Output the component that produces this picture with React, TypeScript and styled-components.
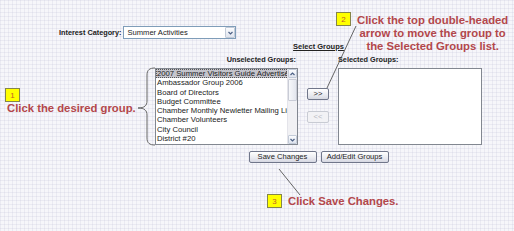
import styled, { createGlobalStyle } from 'styled-components';

const GlobalStyle = createGlobalStyle`
  html, body {
    margin: 0;
    padding: 0;
  }
  body {
    font-family: 'Liberation Sans', Arial, sans-serif;
  }
`;

/* ---- page ---- */

const Page = styled.div`
  position: relative;
  width: 514px;
  height: 231px;
  overflow: hidden;
  box-sizing: border-box;
  padding-top: 26px;
  color: #222;
  background-color: #f6f6fa;
  background-image:
    linear-gradient(to right, rgba(205, 205, 222, 0.3) 1px, transparent 1px),
    linear-gradient(to bottom, rgba(205, 205, 222, 0.3) 1px, transparent 1px);
  background-size: 4px 4px;
`;

/* ---- category row ---- */

const CategoryRow = styled.div`
  display: flex;
  align-items: center;
  gap: 2px;
  height: 13px;
  padding-left: 59px;
`;

const FieldLabel = styled.span`
  font-size: 7.3px;
  font-weight: bold;
`;

const Dropdown = styled.div`
  display: flex;
  width: 113px;
  height: 13px;
  box-sizing: border-box;
  border: 1px solid #7f9db9;
  background: #fff;
`;

const DropdownValue = styled.span`
  flex: 1;
  padding-left: 3px;
  font-size: 7.6px;
  line-height: 11px;
`;

const ArrowBox = styled.span<{ $disabled?: boolean }>`
  display: flex;
  align-items: center;
  justify-content: center;
  width: 9px;
  height: 9px;
  box-sizing: border-box;
  border: 1px solid #c3cbd8;
  border-radius: 1px;
  background: linear-gradient(#fbfcfe, #dfe4ee);
  color: #4d6185;
`;

const DropdownArrow = styled(ArrowBox)`
  width: 10px;
  height: 11px;
`;

/* ---- groups ---- */

const Groups = styled.div`
  display: grid;
  grid-template-columns: 143px 1fr 144px;
  width: 327px;
  margin: 3px 0 0 155px;
`;

const GroupsTitle = styled.div`
  grid-column: 1 / -1;
  margin-bottom: 3px;
  text-align: center;
  font-size: 7.5px;
  line-height: 10px;
  font-weight: bold;
  text-decoration: underline;
`;

const ColumnHeading = styled.div<{ $align: 'left' | 'right' }>`
  margin-bottom: 3px;
  padding-right: ${({ $align }) => ($align === 'right' ? '2px' : '0')};
  text-align: ${({ $align }) => $align};
  font-size: 7.3px;
  line-height: 10px;
  font-weight: bold;
`;

const ListBox = styled.div`
  display: flex;
  height: 77px;
  box-sizing: border-box;
  border: 1px solid #828790;
  background: #fff;
  overflow: hidden;
`;

const Items = styled.div`
  flex: 1;
  min-width: 0;
`;

const Item = styled.div<{ $selected?: boolean }>`
  height: 9.3px;
  padding-left: 1px;
  font-size: 7.7px;
  line-height: 9.3px;
  white-space: nowrap;
  overflow: hidden;
  background: ${({ $selected }) => ($selected ? '#c4c4cc' : 'transparent')};
  outline: ${({ $selected }) => ($selected ? '1px dotted #555' : 'none')};
  outline-offset: -1px;
`;

const Scrollbar = styled.div`
  display: flex;
  flex-direction: column;
  width: 9px;
  background: #f1f1f4;
  border-left: 1px solid #e4e4ea;
`;

const ScrollTrack = styled.div`
  flex: 1;
  padding-top: 1px;
`;

const ScrollThumb = styled.div`
  height: 22px;
  box-sizing: border-box;
  border: 1px solid #c9ccd6;
  border-radius: 1px;
  background: linear-gradient(to right, #f7f8fb, #e3e6ee);
`;

const MoveColumn = styled.div`
  display: flex;
  flex-direction: column;
  align-items: center;
  gap: 11px;
  padding-top: 20px;
`;

const Button = styled.button<{ $width: number; $disabled?: boolean }>`
  width: ${({ $width }) => $width}px;
  height: 12px;
  padding: 0;
  box-sizing: border-box;
  border: 1px solid ${({ $disabled }) => ($disabled ? '#c8cbd3' : '#70768a')};
  border-radius: 2px;
  background: ${({ $disabled }) =>
    $disabled ? '#f2f2f5' : 'linear-gradient(#ffffff, #e9eaf0 60%, #d6d8e2)'};
  color: ${({ $disabled }) => ($disabled ? '#b8bac2' : '#222')};
  font-family: 'Liberation Sans', Arial, sans-serif;
  font-size: 7.6px;
  line-height: 10px;
  white-space: nowrap;
`;

const ActionRow = styled.div`
  display: flex;
  justify-content: center;
  gap: 4px;
  width: 327px;
  margin: 6px 0 0 155px;
`;

/* ---- annotations ---- */

const Callout = styled.div<{ $x: number; $y: number; $column?: boolean }>`
  position: absolute;
  left: ${({ $x }) => $x}px;
  top: ${({ $y }) => $y}px;
  display: flex;
  flex-direction: ${({ $column }) => ($column ? 'column' : 'row')};
  align-items: ${({ $column }) => ($column ? 'flex-start' : 'center')};
`;

const Badge = styled.div`
  display: flex;
  align-items: center;
  justify-content: center;
  width: 15px;
  height: 14px;
  box-sizing: border-box;
  border: 1px solid #85854a;
  background: #ffff00;
  color: #c0602a;
  font-size: 8px;
`;

const Note = styled.div<{ $offset?: number }>`
  margin-left: ${({ $offset }) => $offset ?? 0}px;
  color: #b3474b;
  font-size: 11.3px;
  font-weight: bold;
  line-height: 13px;
  text-align: center;
  white-space: nowrap;
`;

const Overlay = styled.svg`
  position: absolute;
  inset: 0;
  pointer-events: none;
`;

const Chevron = ({ up }: { up?: boolean }) => (
  <svg width="5" height="4" viewBox="0 0 5 4">
    <path
      d={up ? 'M0.5 3 L2.5 1 L4.5 3' : 'M0.5 1 L2.5 3 L4.5 1'}
      fill="none"
      stroke="currentColor"
      strokeWidth="1.2"
    />
  </svg>
);

const groups = [
  '2007 Summer Visitors Guide Advertisers',
  'Ambassador Group 2006',
  'Board of Directors',
  'Budget Committee',
  'Chamber Monthly Newletter Mailing List',
  'Chamber Volunteers',
  'City Council',
  'District #20',
];

const App = () => {
  return (
    <Page>
      <GlobalStyle />

      <CategoryRow>
        <FieldLabel>Interest Category:</FieldLabel>
        <Dropdown>
          <DropdownValue>Summer Activities</DropdownValue>
          <DropdownArrow>
            <Chevron />
          </DropdownArrow>
        </Dropdown>
      </CategoryRow>

      <Groups>
        <GroupsTitle>Select Groups</GroupsTitle>
        <ColumnHeading $align="right">Unselected Groups:</ColumnHeading>
        <div />
        <ColumnHeading $align="left">Selected Groups:</ColumnHeading>

        <ListBox>
          <Items>
            {groups.map((g, i) => (
              <Item key={g} $selected={i === 0}>
                {g}
              </Item>
            ))}
          </Items>
          <Scrollbar>
            <ArrowBox>
              <Chevron up />
            </ArrowBox>
            <ScrollTrack>
              <ScrollThumb />
            </ScrollTrack>
            <ArrowBox>
              <Chevron />
            </ArrowBox>
          </Scrollbar>
        </ListBox>

        <MoveColumn>
          <Button $width={22}>&gt;&gt;</Button>
          <Button $width={22} $disabled>
            &lt;&lt;
          </Button>
        </MoveColumn>

        <ListBox />
      </Groups>

      <ActionRow>
        <Button $width={68}>Save Changes</Button>
        <Button $width={68}>Add/Edit Groups</Button>
      </ActionRow>

      <Overlay width="514" height="231" viewBox="0 0 514 231">
        <path
          d="M155 68 C149.5 68 147 70 147 75 L147 101 C147 105.5 144.5 108 138 108 C144.5 108 147 110.5 147 115 L147 138 C147 143 149.5 145 155 145"
          fill="none"
          stroke="#666"
          strokeWidth="1"
        />
        <line x1="356" y1="26" x2="327" y2="88" stroke="#555" strokeWidth="0.9" />
        <line x1="279" y1="169" x2="300" y2="195" stroke="#555" strokeWidth="0.9" />
      </Overlay>

      <Callout $x={5} $y={88} $column>
        <Badge>1</Badge>
        <Note $offset={2}>Click the desired group.</Note>
      </Callout>

      <Callout $x={336} $y={12} style={{ alignItems: 'flex-start' }}>
        <Badge>2</Badge>
        <Note $offset={6} style={{ marginTop: 2 }}>
          Click the top double-headed
          <br />
          arrow to move the group to
          <br />
          the Selected Groups list.
        </Note>
      </Callout>

      <Callout $x={267} $y={194}>
        <Badge>3</Badge>
        <Note $offset={6}>Click Save Changes.</Note>
      </Callout>
    </Page>
  );
};

export default App;
